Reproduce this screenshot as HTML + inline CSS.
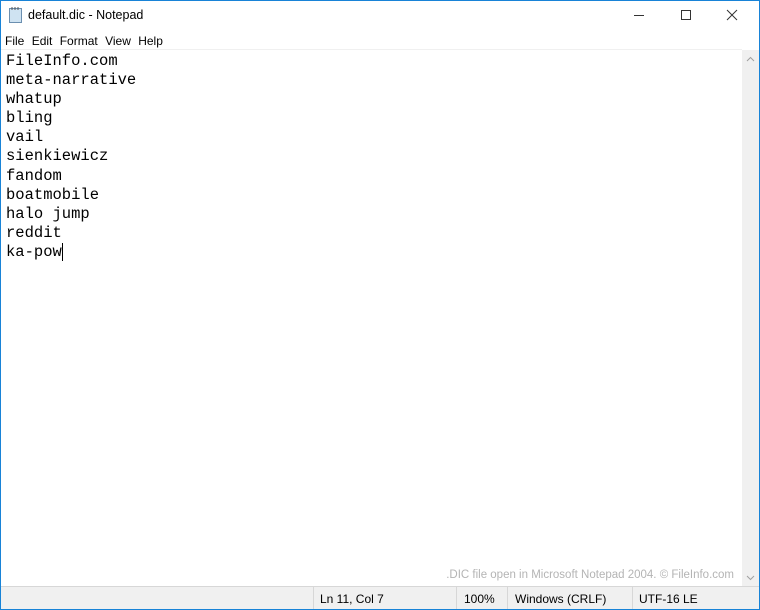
<!DOCTYPE html>
<html><head><style>
*{margin:0;padding:0;box-sizing:border-box}
body{width:760px;height:610px;background:#fff;position:relative;overflow:hidden;font-family:"Liberation Sans",sans-serif}
.frame{position:absolute;left:0;top:0;width:760px;height:610px;border:1px solid #1883d7;z-index:5}
.title{position:absolute;left:28px;top:8px;font-size:12.5px;color:#000}
.menu{position:absolute;left:5px;top:34px;font-size:12px;color:#000;word-spacing:1px}
.menu span{margin-right:3px}
.text{position:absolute;left:1px;top:49px;width:741px;height:537px;border-top:1px solid #f0f0f0}
pre{position:absolute;left:5px;top:2px;font-family:"Liberation Mono",monospace;font-size:15.5px;line-height:19.1px;color:#000}
.sb{position:absolute;left:742px;top:50px;width:17px;height:536px;background:#f0f0f0}
.status{position:absolute;left:1px;top:586px;width:758px;height:23px;background:#f0f0f0;border-top:1px solid #d7d7d7;font-size:12px;color:#000;overflow:hidden}
.status div{position:absolute;top:5px}
.sep{position:absolute;top:0!important;width:1px;height:23px;background:#d7d7d7}
.wm{position:absolute;right:26px;top:569px;font-size:11.5px;color:#b4b4b4}
</style></head><body>
<div class="frame"></div>
<svg style="position:absolute;left:8px;top:6px" width="16" height="18"><rect x="1.5" y="2.5" width="12" height="14" fill="#cfe3f2" stroke="#6b8fb0"/><line x1="4" y1="1" x2="4" y2="4" stroke="#555"/><line x1="7" y1="1" x2="7" y2="4" stroke="#555"/><line x1="10" y1="1" x2="10" y2="4" stroke="#555"/></svg>
<div class="title">default.dic - Notepad</div>
<svg style="position:absolute;left:630px;top:8px" width="120" height="16"><line x1="4" y1="7.5" x2="14" y2="7.5" stroke="#333"/><rect x="51.5" y="2.5" width="9" height="9" fill="none" stroke="#333"/><path d="M97 2L107 12M107 2L97 12" stroke="#333"/></svg>
<div class="menu"><span>File</span> <span>Edit</span> <span>Format</span> <span>View</span> <span>Help</span></div>
<div class="text"><pre>FileInfo.com
meta-narrative
whatup
bling
vail
sienkiewicz
fandom
boatmobile
halo jump
reddit
ka-pow<span style="border-left:1px solid #000"></span></pre></div>
<div class="sb"><svg style="position:absolute;left:4px;top:6px" width="9" height="6"><path d="M1 5L4.5 1.5L8 5" fill="none" stroke="#a0a0a0"/></svg><svg style="position:absolute;left:4px;top:525px" width="9" height="6"><path d="M1 1L4.5 4.5L8 1" fill="none" stroke="#a0a0a0"/></svg></div>
<div class="wm">.DIC file open in Microsoft Notepad 2004. © FileInfo.com</div>
<div class="status">
<div class="sep" style="left:312px"></div><div class="sep" style="left:455px"></div><div class="sep" style="left:506px"></div><div class="sep" style="left:631px"></div>
<div style="left:319px">Ln 11, Col 7</div>
<div style="left:463px">100%</div>
<div style="left:514px">Windows (CRLF)</div>
<div style="left:638px">UTF-16 LE</div>
</div>
</body></html>
